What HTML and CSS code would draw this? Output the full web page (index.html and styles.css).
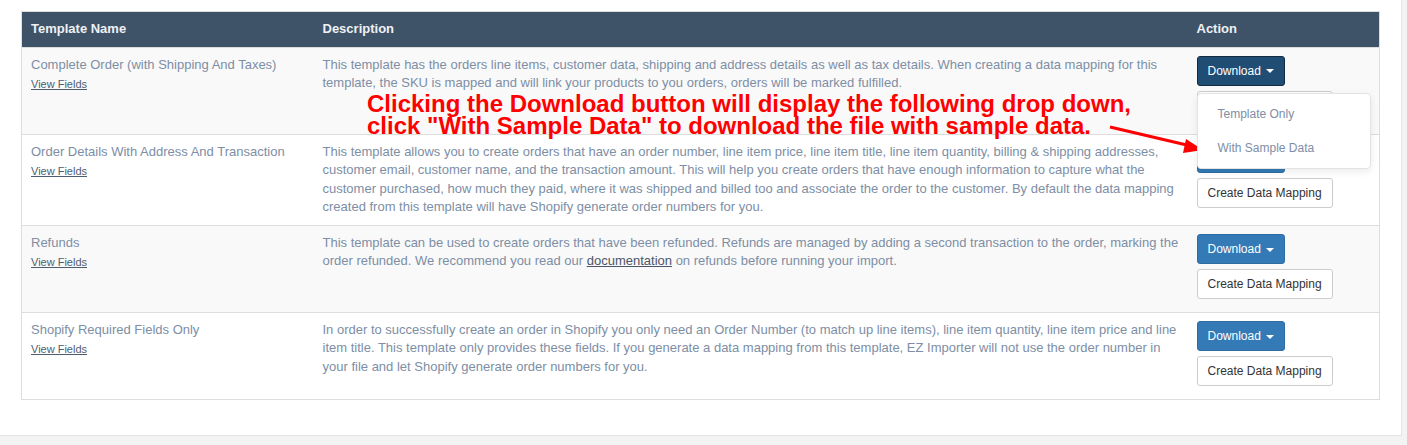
FILE: index.html
```html
<!DOCTYPE html>
<html lang="en">
<head>
<meta charset="utf-8">
<title>Templates</title>
<link rel="stylesheet" href="styles.css">
</head>
<body>
<div class="panel">
  <table class="templates">
    <thead>
      <tr>
        <th class="col-name">Template Name</th>
        <th class="col-desc">Description</th>
        <th class="col-action">Action</th>
      </tr>
    </thead>
    <tbody>
      <tr class="odd">
        <td>Complete Order (with Shipping And Taxes)<a class="view-fields" href="#">View Fields</a></td>
        <td>This template has the orders line items, customer data, shipping and address details as well as tax details. When creating a data mapping for this template, the SKU is mapped and will link your products to you orders, orders will be marked fulfilled.</td>
        <td>
          <div class="btn-group">
            <button class="btn btn-primary active">Download <span class="caret"></span></button>
            <ul class="dropdown-menu">
              <li><a href="#">Template Only</a></li>
              <li><a href="#">With Sample Data</a></li>
            </ul>
          </div>
          <button class="btn btn-default">Create Data Mapping</button>
        </td>
      </tr>
      <tr>
        <td>Order Details With Address And Transaction<a class="view-fields" href="#">View Fields</a></td>
        <td>This template allows you to create orders that have an order number, line item price, line item title, line item quantity, billing &amp; shipping addresses, customer email, customer name, and the transaction amount. This will help you create orders that have enough information to capture what the customer purchased, how much they paid, where it was shipped and billed too and associate the order to the customer. By default the data mapping created from this template will have Shopify generate order numbers for you.</td>
        <td>
          <div class="btn-group">
            <button class="btn btn-primary">Download <span class="caret"></span></button>
          </div>
          <button class="btn btn-default">Create Data Mapping</button>
        </td>
      </tr>
      <tr class="odd">
        <td>Refunds<a class="view-fields" href="#">View Fields</a></td>
        <td>This template can be used to create orders that have been refunded. Refunds are managed by adding a second transaction to the order, marking the order refunded. We recommend you read our <a class="doc-link" href="#">documentation</a> on refunds before running your import.</td>
        <td>
          <div class="btn-group">
            <button class="btn btn-primary">Download <span class="caret"></span></button>
          </div>
          <button class="btn btn-default">Create Data Mapping</button>
        </td>
      </tr>
      <tr>
        <td>Shopify Required Fields Only<a class="view-fields" href="#">View Fields</a></td>
        <td>In order to successfully create an order in Shopify you only need an Order Number (to match up line items), line item quantity, line item price and line item title. This template only provides these fields. If you generate a data mapping from this template, EZ Importer will not use the order number in your file and let Shopify generate order numbers for you.</td>
        <td>
          <div class="btn-group">
            <button class="btn btn-primary">Download <span class="caret"></span></button>
          </div>
          <button class="btn btn-default">Create Data Mapping</button>
        </td>
      </tr>
    </tbody>
  </table>

  <div class="annotation">Clicking the Download button will display the following drop down,<br>click "With Sample Data" to download the file with sample data.</div>
  <svg class="arrow" width="110" height="40" viewBox="0 0 110 40">
    <line x1="4" y1="7" x2="85" y2="26" stroke="#ff0000" stroke-width="3"/>
    <polygon points="97,30 80,19 77,33" fill="#ff0000"/>
  </svg>
</div>
</body>
</html>
```

FILE: styles.css
```css
* { box-sizing: border-box; }

html, body {
  margin: 0;
  padding: 0;
  background: #f3f3f3;
}

body {
  font-family: "Liberation Sans", Arial, Helvetica, sans-serif;
  font-size: 13px;
  line-height: 1.42857;
  color: #7d8ea5;
}

.panel {
  position: relative;
  width: 1402px;
  height: 436px;
  background: #ffffff;
  border-right: 1px solid #e4e4e4;
  border-bottom: 1px solid #e4e4e4;
  padding: 11px 22px 0 21px;
}

.templates {
  width: 1358px;
  border-collapse: collapse;
  border: 1px solid #dddddd;
  table-layout: fixed;
}

.templates th {
  background: #3e5368;
  color: #eef1f4;
  font-weight: bold;
  text-align: left;
  padding: 8px 10px;
  height: 34px;
  border: none;
}

.col-name { width: 291px; }
.col-desc { width: 874px; }
.col-action { width: 193px; }

.templates td {
  padding: 8px 10px;
  vertical-align: top;
  border-top: 1px solid #dddddd;
}

.templates th:first-child,
.templates td:first-child { padding-left: 9px; }

.templates td:nth-child(2) { padding-right: 6px; }

.templates tr.odd td { background: #f9f9f9; }

.view-fields {
  display: block;
  font-size: 11px;
  line-height: 15px;
  margin-top: 3px;
  color: #4f5d70;
  text-decoration: underline;
}

.doc-link {
  color: #4b5668;
  text-decoration: underline;
}

.btn-group {
  position: relative;
  display: block;
}

.btn {
  display: inline-block;
  font-family: "Liberation Sans", Arial, Helvetica, sans-serif;
  font-size: 12px;
  line-height: 18px;
  height: 30px;
  padding: 5px 10px;
  border-radius: 3px;
  border: 1px solid transparent;
  margin-bottom: 5px;
  cursor: pointer;
}

.btn-primary {
  background: #337ab7;
  border-color: #2e6da4;
  color: #ffffff;
}

.btn-primary.active {
  background: #204d74;
  border-color: #122b40;
}

.btn-default {
  background: #ffffff;
  border-color: #cccccc;
  color: #333333;
}

.caret {
  display: inline-block;
  width: 0;
  height: 0;
  margin-left: 2px;
  vertical-align: middle;
  border-top: 4px solid #ffffff;
  border-left: 4px solid transparent;
  border-right: 4px solid transparent;
}

.dropdown-menu {
  position: absolute;
  top: 37px;
  left: 0;
  z-index: 10;
  width: 174px;
  margin: 0;
  padding: 3px 0;
  list-style: none;
  background: #ffffff;
  border: 1px solid #e3e3e3;
  border-radius: 4px;
  box-shadow: 0 3px 8px rgba(0, 0, 0, 0.08);
}

.dropdown-menu a {
  display: block;
  padding: 8px 20px;
  line-height: 18px;
  font-size: 12px;
  color: #7d8ea5;
  text-decoration: none;
}

.annotation {
  position: absolute;
  left: 367px;
  top: 93px;
  font-size: 24px;
  line-height: 22px;
  font-weight: bold;
  color: #ff0000;
  white-space: nowrap;
}

.arrow {
  position: absolute;
  left: 1106px;
  top: 120px;
}
```
